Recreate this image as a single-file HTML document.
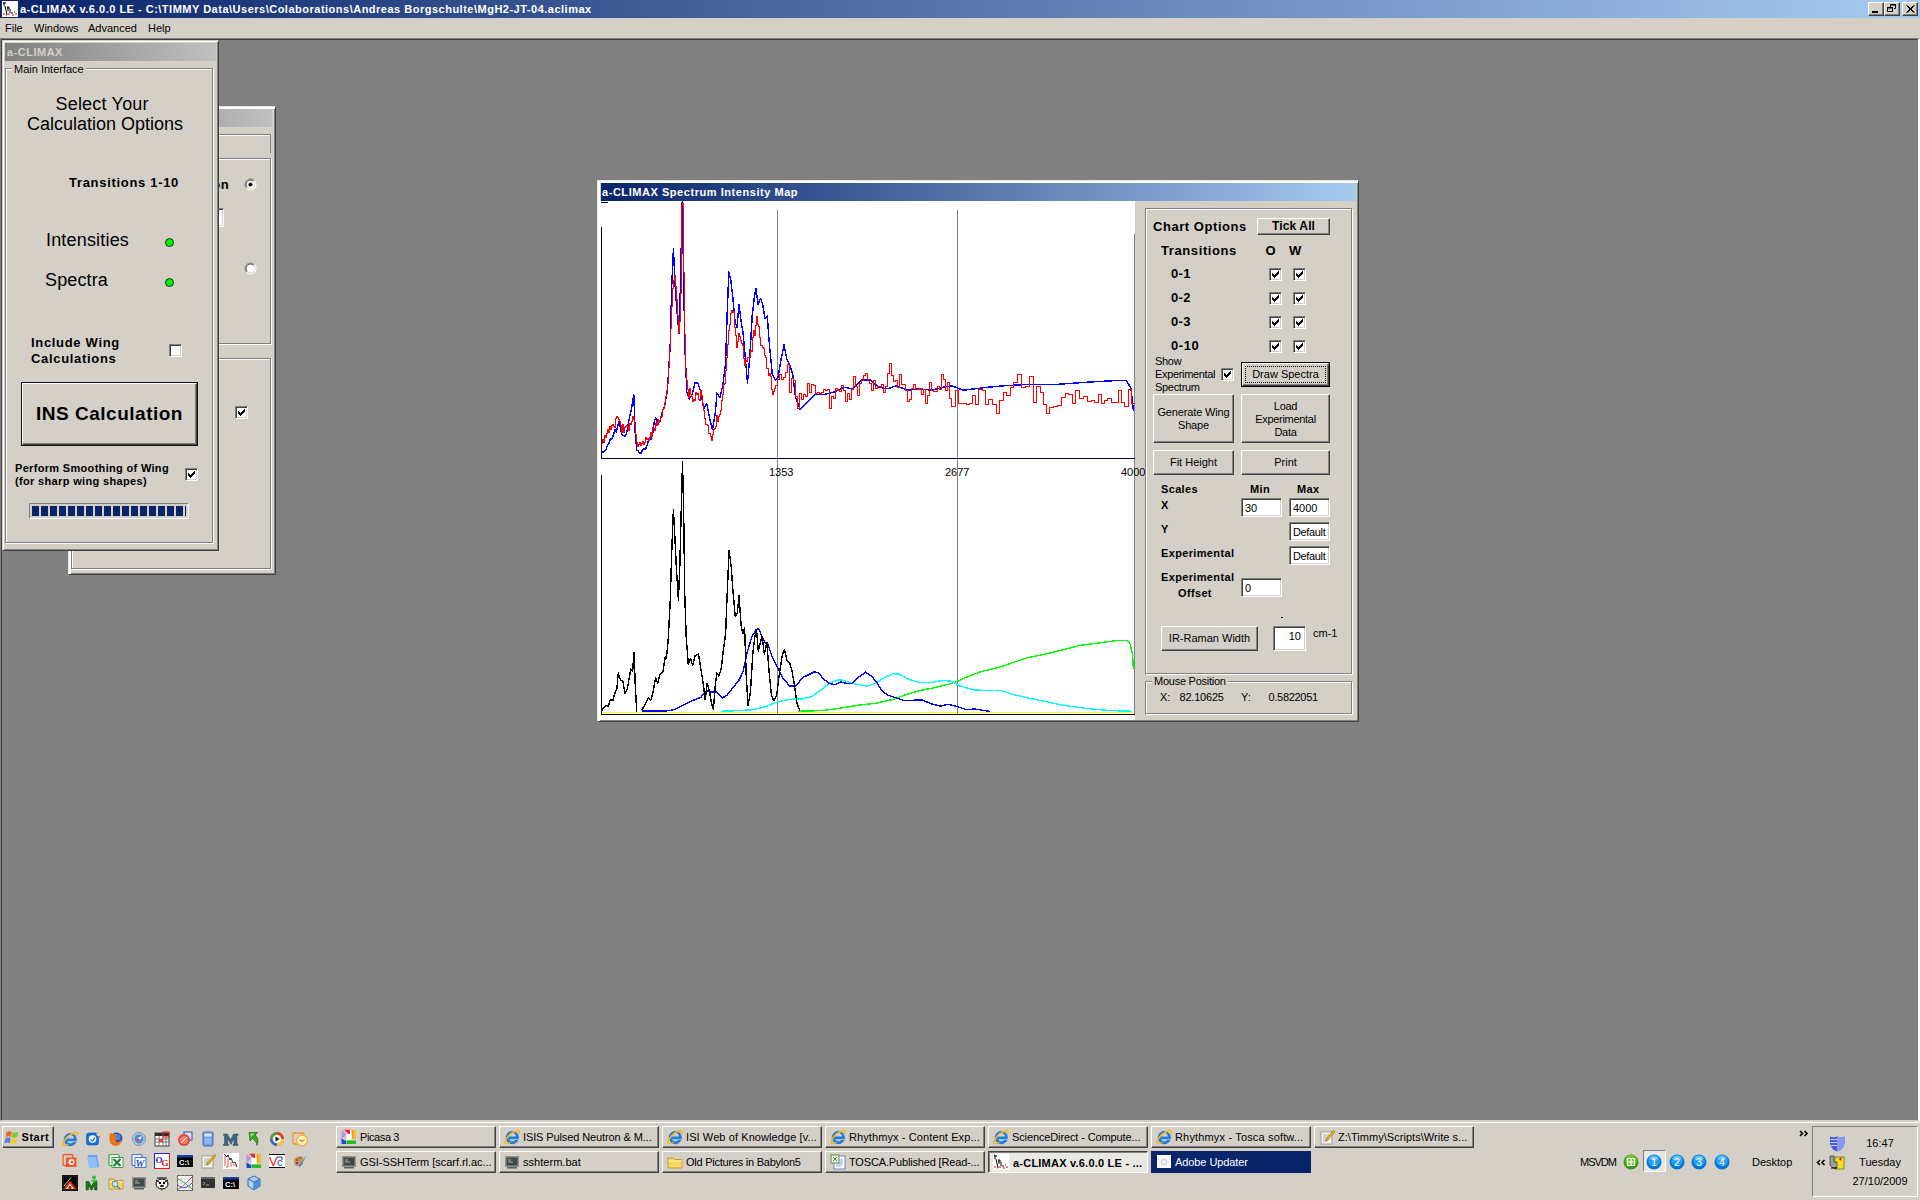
<!DOCTYPE html>
<html><head><meta charset="utf-8"><title>a-CLIMAX</title>
<style>
*{box-sizing:border-box;margin:0;padding:0}
html,body{width:1920px;height:1200px;overflow:hidden}
body{position:relative;background:#808080;font-family:"Liberation Sans",sans-serif;font-size:11px;color:#000;line-height:1}
.a{position:absolute}
.t{position:absolute;white-space:nowrap;line-height:1}
.b{font-weight:bold}
.face{background:#d4d0c8}
/* classic raised window border */
.win{position:absolute;background:#d4d0c8;border:1px solid;border-color:#d4d0c8 #404040 #404040 #d4d0c8;box-shadow:inset 1px 1px 0 #fff,inset -1px -1px 0 #808080}
.btn{position:absolute;background:#d4d0c8;border:1px solid;border-color:#fff #404040 #404040 #fff;box-shadow:inset -1px -1px 0 #808080,inset 1px 1px 0 #d4d0c8;text-align:center;font-size:11px}
.sunk{position:absolute;background:#fff;border:1px solid;border-color:#808080 #fff #fff #808080;box-shadow:inset 1px 1px 0 #404040,inset -1px -1px 0 #d4d0c8}
.grp{position:absolute;border:1px solid #808080;box-shadow:inset 1px 1px 0 #fff,1px 1px 0 #fff}
.etch{position:absolute;border:1px solid #808080;box-shadow:inset 1px 1px 0 #fff,1px 1px 0 #fff}
.cb{position:absolute;width:13px;height:13px;background:#fff;border:1px solid;border-color:#808080 #fff #fff #808080;box-shadow:inset 1px 1px 0 #404040,inset -1px -1px 0 #d4d0c8}
.cb.on:after{content:"";position:absolute;left:2px;top:2px;width:7px;height:7px;background:
 linear-gradient(#000,#000) 0px 2px/1px 3px no-repeat,
 linear-gradient(#000,#000) 1px 3px/1px 3px no-repeat,
 linear-gradient(#000,#000) 2px 4px/1px 3px no-repeat,
 linear-gradient(#000,#000) 3px 3px/1px 3px no-repeat,
 linear-gradient(#000,#000) 4px 2px/1px 3px no-repeat,
 linear-gradient(#000,#000) 5px 1px/1px 3px no-repeat,
 linear-gradient(#000,#000) 6px 0px/1px 3px no-repeat}
.tb{position:absolute;height:22px;width:160px;background:#d4d0c8;border:1px solid;border-color:#fff #404040 #404040 #fff;box-shadow:inset -1px -1px 0 #808080;font-size:11px}
.tb span{position:absolute;left:23px;top:5px;white-space:nowrap;letter-spacing:-.25px}
.tb i{position:absolute;left:4px;top:2px;width:16px;height:16px}
</style></head><body>

<!-- ===== main title bar ===== -->
<div class="a" style="left:0;top:0;width:1920px;height:18px;background:linear-gradient(90deg,#0a246a,#a6caf0)"></div>
<svg class="a" style="left:2px;top:1px" width="16" height="16" viewBox="0 0 16 16"><rect width="16" height="16" fill="#fff"/><path d="M2 1v4M1 2h3M3 5l2 9M5 7h3M6 5v5M8 8v4M9 12h2" stroke="#000" fill="none"/><path d="M1 13h2M4 14h1M6 13h2M10 14h2M13 13h2M12 11h1" stroke="#e00000"/></svg>
<div class="t b" style="left:20px;top:4px;color:#fff;font-size:11px;letter-spacing:.5px">a-CLIMAX v.6.0.0 LE - C:\TIMMY Data\Users\Colaborations\Andreas Borgschulte\MgH2-JT-04.aclimax</div>
<!-- caption buttons -->
<div class="btn" style="left:1868px;top:2px;width:16px;height:14px"><div class="a" style="left:3px;top:8px;width:6px;height:2px;background:#000"></div></div>
<div class="btn" style="left:1884px;top:2px;width:16px;height:14px"><svg class="a" style="left:2px;top:1px" width="10" height="10"><path d="M3.5 3V.5h5v4H7M.5 3.5h5v4h-5zM3 1h6M0 4h6" stroke="#000" fill="none"/></svg></div>
<div class="btn" style="left:1902px;top:2px;width:16px;height:14px"><svg class="a" style="left:3px;top:2px" width="9" height="8"><path d="M0.5 0.5l7 7M1.5 0.5l7 7M7.5 0.5l-7 7M8.5 0.5l-7 7" stroke="#000" stroke-width="1"/></svg></div>

<!-- ===== menu bar ===== -->
<div class="a face" style="left:0;top:18px;width:1920px;height:20px"></div>
<div class="t" style="left:5px;top:23px">File</div>
<div class="t" style="left:34px;top:23px">Windows</div>
<div class="t" style="left:88px;top:23px">Advanced</div>
<div class="t" style="left:148px;top:23px">Help</div>

<!-- ===== MDI client ===== -->
<div class="a" style="left:0;top:38px;width:1920px;height:1083px;background:#808080;border-style:solid;border-width:1px 2px 1px 1px;border-color:#808080 #fff #d4d0c8 #808080;box-shadow:inset 1px 1px 0 #404040"></div>
<!-- ===== back child window ===== -->
<div class="win" style="left:68px;top:106px;width:208px;height:469px;border-color:#e8e6e0 #404040 #404040 #e8e6e0;box-shadow:inset 2px 2px 0 #fff,inset -1px -1px 0 #808080"></div>
<div class="a" style="left:72px;top:109px;width:200px;height:18px;background:linear-gradient(90deg,#808080,#c0c0c0)"></div>
<div class="grp" style="left:71px;top:134px;width:200px;height:19px;border-bottom:none;box-shadow:inset 1px 1px 0 #fff"></div>
<div class="grp" style="left:71px;top:158px;width:200px;height:186px"></div>
<div class="grp" style="left:71px;top:358px;width:200px;height:211px"></div>
<div class="t b" style="left:150px;width:79.5px;text-align:right;top:178px;font-size:13px;letter-spacing:.7px">ion</div>
<div class="sunk" style="left:200px;top:208px;width:24px;height:19px"></div>
<svg class="a" style="left:243.5px;top:177.5px" width="14" height="14"><circle cx="6.5" cy="6.5" r="5.5" fill="#fff"/><path d="M2.6 10.4A5.5 5.5 0 0 1 10.4 2.6" stroke="#808080" fill="none"/><path d="M3.3 9.7A4.5 4.5 0 0 1 9.7 3.3" stroke="#404040" fill="none"/><path d="M10.4 2.6A5.5 5.5 0 0 1 2.6 10.4" stroke="#fff" fill="none"/><path d="M9.7 3.3A4.5 4.5 0 0 1 3.3 9.7" stroke="#d4d0c8" fill="none"/><circle cx="6.5" cy="6.5" r="2" fill="#000"/></svg>
<svg class="a" style="left:243.5px;top:261.5px" width="14" height="14"><circle cx="6.5" cy="6.5" r="5.5" fill="#fff"/><path d="M2.6 10.4A5.5 5.5 0 0 1 10.4 2.6" stroke="#808080" fill="none"/><path d="M3.3 9.7A4.5 4.5 0 0 1 9.7 3.3" stroke="#404040" fill="none"/><path d="M10.4 2.6A5.5 5.5 0 0 1 2.6 10.4" stroke="#fff" fill="none"/><path d="M9.7 3.3A4.5 4.5 0 0 1 3.3 9.7" stroke="#d4d0c8" fill="none"/></svg>
<div class="cb on" style="left:235px;top:406px"></div>

<!-- ===== a-CLIMAX main interface window ===== -->
<div class="win" style="left:2px;top:40px;width:217px;height:511px"></div>
<div class="a" style="left:5px;top:43px;width:211px;height:18px;background:linear-gradient(90deg,#808080,#c0c0c0)"></div>
<div class="t b" style="left:7px;top:47px;color:#d4d0c8;font-size:11px;letter-spacing:.5px">a-CLIMAX</div>
<div class="grp" style="left:5px;top:68px;width:208px;height:475px"></div>
<div class="t face" style="left:12px;top:64px;padding:0 2px;font-size:11px">Main Interface</div>
<div class="t" style="left:55.5px;top:95px;font-size:18px;letter-spacing:.2px">Select Your</div>
<div class="t" style="left:27px;top:115px;font-size:18px">Calculation Options</div>
<div class="t b" style="left:69px;top:176px;font-size:13px;letter-spacing:.69px">Transitions 1-10</div>
<div class="t" style="left:46px;top:231px;font-size:18px;letter-spacing:.18px">Intensities</div>
<div class="a" style="left:165px;top:238px;width:9px;height:9px;border-radius:50%;background:#00f000;border:1px solid #103810"></div>
<div class="t" style="left:45px;top:271px;font-size:18px;letter-spacing:.14px">Spectra</div>
<div class="a" style="left:165px;top:278px;width:9px;height:9px;border-radius:50%;background:#00f000;border:1px solid #103810"></div>
<div class="t b" style="left:31px;top:336px;font-size:13px;letter-spacing:.68px">Include Wing</div>
<div class="t b" style="left:31px;top:352px;font-size:13px;letter-spacing:.68px">Calculations</div>
<div class="cb" style="left:169px;top:344px"></div>
<div class="btn" style="left:22px;top:383px;width:175px;height:62px;box-shadow:inset -1px -1px 0 #808080,0 0 0 1px #101010"></div>
<div class="t b" style="left:21px;width:177px;top:404px;font-size:19px;letter-spacing:.51px;text-align:center">INS Calculation</div>
<div class="t b" style="left:15px;top:463px;letter-spacing:.32px">Perform Smoothing of Wing</div>
<div class="t b" style="left:15px;top:476px;letter-spacing:.34px">(for sharp wing shapes)</div>
<div class="cb on" style="left:185px;top:468px"></div>
<div class="sunk face" style="left:29px;top:503px;width:160px;height:16px;background:#d4d0c8 repeating-linear-gradient(90deg,#0a246a 0,#0a246a 7px,#d4d0c8 7px,#d4d0c8 9px) 2px 0/156px 100% no-repeat;box-shadow:none;border-color:#808080 #fff #fff #808080;background-clip:content-box;padding:2px"></div>

<!-- ===== Spectrum Intensity Map window ===== -->
<div class="win" style="left:597px;top:180px;width:762px;height:542px;border-color:#e8e6e0 #404040 #404040 #e8e6e0;box-shadow:inset 2px 2px 0 #fff,inset -1px -1px 0 #808080"></div>
<div class="a" style="left:601px;top:183px;width:755px;height:18px;background:linear-gradient(90deg,#0a246a,#a6caf0)"></div>
<div class="t b" style="left:602px;top:187px;color:#fff;letter-spacing:.55px">a-CLIMAX Spectrum Intensity Map</div>
<!-- chart -->
<div class="a" style="left:598px;top:201px;width:537px;height:519px;background:#fff;overflow:hidden">
<svg width="534" height="519" viewBox="0 0 534 519" style="position:absolute;left:3px;top:0" shape-rendering="crispEdges">
 <path d="M0 511.5h533" stroke="#ffff00"/>
 <path d="M0 1.5h7" stroke="#000"/>
 <path d="M0.5 26v232" stroke="#000"/>
 <path d="M533.5 33v481" stroke="#808080"/>
 <path d="M176.5 9v504M356.5 9v504" stroke="#808080"/>
 <path d="M0 257.5h534" stroke="#000040"/>
 <path d="M0.5 274v240" stroke="#000"/>
 <path d="M0 513.5h534" stroke="#000"/>
</svg>
<svg width="534" height="519" viewBox="0 0 534 519" style="position:absolute;left:3px;top:0" fill="none" stroke-width="1.42" stroke-linejoin="round" shape-rendering="crispEdges">
 <path d="M0.7,251.9 L2.1,250.9 L3.6,250.4 L5.0,248.3 L6.5,244.6 L8.0,242.0 L9.4,237.8 L10.9,237.9 L12.3,234.4 L13.8,228.6 L15.2,231.2 L16.7,225.7 L18.2,219.8 L20.5,233.0 L22.5,234.4 L24.0,235.4 L25.5,233.0 L26.9,225.0 L28.4,216.9 L30.4,208.2 L32.8,193.6 L34.2,231.5 L35.7,249.0 L37.1,249.9 L38.6,251.9 L40.0,252.1 L41.5,249.0 L43.0,247.5 L44.4,248.5 L45.9,244.7 L47.3,240.2 L48.8,238.4 L50.2,237.9 L51.7,233.0 L53.2,221.0 L54.6,216.9 L56.1,221.4 L57.5,222.8 L59.0,220.3 L60.5,214.8 L61.9,208.2 L63.4,206.1 L64.8,197.7 L66.3,190.7 L69.2,144.0 L70.7,85.7 L72.4,47.8 L74.2,85.7 L75.9,109.0 L78.0,132.3 L79.4,85.7 L81.2,1.1 L82.3,56.5 L83.8,144.0 L85.8,190.7 L88.2,198.0 L91.1,193.6 L94.0,181.9 L96.9,181.9 L99.8,190.7 L102.8,208.2 L105.7,202.3 L108.6,216.9 L111.5,228.6 L114.4,211.1 L115.9,192.1 L118.8,196.5 L121.7,184.8 L124.6,161.5 L126.1,114.8 L127.8,71.1 L129.9,79.8 L131.9,97.3 L134.0,120.7 L136.0,126.5 L138.0,103.2 L140.1,120.7 L142.1,132.3 L144.2,155.7 L146.5,181.9 L148.8,155.7 L151.2,114.8 L153.2,97.3 L155.0,87.1 L157.0,103.2 L159.6,97.3 L161.7,103.2 L164.0,117.8 L166.3,114.8 L168.4,144.0 L171.3,173.2 L174.2,179.0 L177.1,176.1 L180.0,158.6 L183.0,144.0 L185.9,158.6 L188.8,164.4 L191.7,173.2 L194.6,196.5 L199.0,208.2 L204.8,202.3 L213.6,193.6 L222.3,193.6 L234.0,190.7 L242.8,186.3 L251.5,187.8 L260.2,179.0 L269.0,179.0 L277.8,186.3 L286.5,187.8 L295.2,184.8 L306.9,189.2 L318.6,187.8 L330.2,189.2 L341.9,186.3 L350.7,184.8 L362.3,189.2 L374.0,187.8 L385.7,186.3 L403.2,184.8 L426.5,183.4 L455.7,183.4 L484.8,181.3 L514.0,179.6 L525.7,179.6 L530.0,187.8 L532.4,209.6" stroke="#0000ff"/>
 <path d="M0.5,242.5 L1.5,242.5 L1.5,238.5 L2.5,238.5 L2.5,241.5 L3.5,241.5 L3.5,234.5 L4.5,234.5 L4.5,236.5 L5.5,236.5 L5.5,232.5 L6.5,232.5 L6.5,228.5 L7.5,228.5 L7.5,231.5 L8.5,231.5 L8.5,225.5 L9.5,225.5 L9.5,228.5 L10.5,228.5 L10.5,224.5 L11.5,224.5 L11.5,223.5 L12.5,223.5 L12.5,225.5 L13.5,225.5 L13.5,226.5 L14.5,226.5 L14.5,217.5 L15.5,217.5 L15.5,215.5 L16.5,215.5 L16.5,216.5 L17.5,216.5 L17.5,218.5 L18.5,218.5 L18.5,220.5 L19.5,220.5 L19.5,224.5 L20.5,224.5 L20.5,231.5 L21.5,231.5 L21.5,223.5 L22.5,223.5 L22.5,231.5 L23.5,231.5 L23.5,226.5 L24.5,226.5 L24.5,225.5 L25.5,225.5 L25.5,224.5 L26.5,224.5 L26.5,225.5 L27.5,225.5 L27.5,229.5 L28.5,229.5 L28.5,222.5 L29.5,222.5 L29.5,223.5 L30.5,223.5 L30.5,220.5 L31.5,220.5 L31.5,215.5 L32.5,215.5 L32.5,218.5 L33.5,218.5 L33.5,223.5 L34.5,223.5 L34.5,233.5 L35.5,233.5 L35.5,241.5 L36.5,241.5 L36.5,245.5 L37.5,245.5 L37.5,243.5 L38.5,243.5 L38.5,241.5 L39.5,241.5 L39.5,244.5 L40.5,244.5 L40.5,242.5 L41.5,242.5 L41.5,240.5 L42.5,240.5 L42.5,243.5 L43.5,243.5 L43.5,241.5 L44.5,241.5 L44.5,236.5 L45.5,236.5 L45.5,238.5 L46.5,238.5 L46.5,237.5 L47.5,237.5 L47.5,239.5 L48.5,239.5 L48.5,236.5 L49.5,236.5 L49.5,231.5 L50.5,231.5 L50.5,235.5 L51.5,235.5 L51.5,226.5 L52.5,226.5 L52.5,227.5 L53.5,227.5 L53.5,229.5 L54.5,229.5 L54.5,222.5 L55.5,222.5 L55.5,224.5 L56.5,224.5 L56.5,218.5 L57.5,218.5 L57.5,221.5 L58.5,221.5 L58.5,219.5 L59.5,219.5 L59.5,215.5 L60.5,215.5 L60.5,215.5 L61.5,215.5 L61.5,208.5 L62.5,208.5 L62.5,207.5 L63.5,207.5 L63.5,201.5 L64.5,201.5 L64.5,195.5 L65.5,195.5 L65.5,189.5 L66.5,189.5 L66.5,182.5 L67.5,182.5 L67.5,165.5 L68.5,165.5 L68.5,145.5 L69.5,145.5 L69.5,127.5 L70.5,127.5 L70.5,105.5 L71.5,105.5 L71.5,87.5 L72.5,87.5 L72.5,79.5 L73.5,79.5 L73.5,74.5 L74.5,74.5 L74.5,85.5 L75.5,85.5 L75.5,98.5 L76.5,98.5 L76.5,114.5 L77.5,114.5 L77.5,131.5 L78.5,131.5 L78.5,120.5 L79.5,120.5 L79.5,92.5 L80.5,92.5 L80.5,4.5 L81.5,4.5 L81.5,2.5 L82.5,2.5 L82.5,71.5 L83.5,71.5 L83.5,133.5 L84.5,133.5 L84.5,170.5 L85.5,170.5 L85.5,179.5 L86.5,179.5 L86.5,188.5 L87.5,188.5 L87.5,196.5 L88.5,196.5 L88.5,187.5 L89.5,187.5 L89.5,193.5 L90.5,193.5 L90.5,195.5 L91.5,195.5 L91.5,200.5 L92.5,200.5 L92.5,198.5 L93.5,198.5 L93.5,199.5 L94.5,199.5 L94.5,191.5 L95.5,191.5 L95.5,193.5 L96.5,193.5 L96.5,192.5 L97.5,192.5 L97.5,198.5 L98.5,198.5 L98.5,199.5 L99.5,199.5 L99.5,189.5 L100.5,189.5 L100.5,194.5 L101.5,194.5 L101.5,202.5 L102.5,202.5 L102.5,209.5 L103.5,209.5 L103.5,217.5 L104.5,217.5 L104.5,223.5 L105.5,223.5 L105.5,223.5 L106.5,223.5 L106.5,224.5 L107.5,224.5 L107.5,232.5 L108.5,232.5 L108.5,232.5 L109.5,232.5 L109.5,235.5 L110.5,235.5 L110.5,239.5 L111.5,239.5 L111.5,233.5 L112.5,233.5 L112.5,228.5 L113.5,228.5 L113.5,227.5 L114.5,227.5 L114.5,225.5 L115.5,225.5 L115.5,214.5 L116.5,214.5 L116.5,220.5 L117.5,220.5 L117.5,215.5 L118.5,215.5 L118.5,213.5 L119.5,213.5 L119.5,209.5 L120.5,209.5 L120.5,199.5 L121.5,199.5 L121.5,193.5 L122.5,193.5 L122.5,183.5 L123.5,183.5 L123.5,182.5 L124.5,182.5 L124.5,169.5 L125.5,169.5 L125.5,156.5 L126.5,156.5 L126.5,143.5 L127.5,143.5 L127.5,129.5 L128.5,129.5 L128.5,123.5 L129.5,123.5 L129.5,112.5 L130.5,112.5 L130.5,109.5 L131.5,109.5 L131.5,111.5 L132.5,111.5 L132.5,110.5 L133.5,110.5 L133.5,126.5 L134.5,126.5 L134.5,134.5 L135.5,134.5 L135.5,146.5 L136.5,146.5 L136.5,140.5 L137.5,140.5 L137.5,132.5 L138.5,132.5 L138.5,135.5 L139.5,135.5 L139.5,139.5 L140.5,139.5 L140.5,142.5 L141.5,142.5 L141.5,144.5 L142.5,144.5 L142.5,157.5 L143.5,157.5 L143.5,164.5 L144.5,164.5 L144.5,159.5 L145.5,159.5 L145.5,160.5 L146.5,160.5 L146.5,156.5 L147.5,156.5 L147.5,156.5 L148.5,156.5 L148.5,156.5 L149.5,156.5 L149.5,149.5 L150.5,149.5 L150.5,150.5 L151.5,150.5 L151.5,136.5 L152.5,136.5 L152.5,129.5 L153.5,129.5 L153.5,134.5 L154.5,134.5 L154.5,124.5 L155.5,124.5 L155.5,115.5 L156.5,115.5 L156.5,123.5 L157.5,123.5 L157.5,125.5 L158.5,125.5 L158.5,136.5 L159.5,136.5 L159.5,144.5 L160.5,144.5 L160.5,144.5 L161.5,144.5 L161.5,146.5 L162.5,146.5 L162.5,147.5 L163.5,147.5 L163.5,154.5 L164.5,154.5 L164.5,156.5 L165.5,156.5 L165.5,167.5 L166.5,167.5 L166.5,167.5 L167.5,167.5 L167.5,174.5 L168.5,174.5 L168.5,172.5 L169.5,172.5 L169.5,175.5 L170.5,175.5 L170.5,188.5 L171.5,188.5 L171.5,193.5 L172.5,193.5 L172.5,190.5 L173.5,190.5 L173.5,187.5 L174.5,187.5 L174.5,184.5 L176.5,184.5 L176.5,178.5 L178.5,178.5 L178.5,173.5 L180.5,173.5 L180.5,178.5 L182.5,178.5 L182.5,176.5 L184.5,176.5 L184.5,171.5 L186.5,171.5 L186.5,163.5 L188.5,163.5 L188.5,191.5 L190.5,191.5 L190.5,177.5 L192.5,177.5 L192.5,179.5 L194.5,179.5 L194.5,195.5 L196.5,195.5 L196.5,207.5 L198.5,207.5 L198.5,192.5 L200.5,192.5 L200.5,198.5 L202.5,198.5 L202.5,193.5 L204.5,193.5 L204.5,195.5 L206.5,195.5 L206.5,182.5 L208.5,182.5 L208.5,191.5 L210.5,191.5 L210.5,183.5 L212.5,183.5 L212.5,184.5 L214.5,184.5 L214.5,192.5 L216.5,192.5 L216.5,191.5 L218.5,191.5 L218.5,192.5 L220.5,192.5 L220.5,191.5 L222.5,191.5 L222.5,188.5 L224.5,188.5 L224.5,189.5 L226.5,189.5 L226.5,188.5 L228.5,188.5 L228.5,207.5 L230.5,207.5 L230.5,195.5 L232.5,195.5 L232.5,197.5 L234.5,197.5 L234.5,187.5 L236.5,187.5 L236.5,189.5 L238.5,189.5 L238.5,190.5 L240.5,190.5 L240.5,184.5 L242.5,184.5 L242.5,189.5 L244.5,189.5 L244.5,200.5 L246.5,200.5 L246.5,192.5 L248.5,192.5 L248.5,198.5 L250.5,198.5 L250.5,188.5 L252.5,188.5 L252.5,175.5 L254.5,175.5 L254.5,185.5 L256.5,185.5 L256.5,194.5 L258.5,194.5 L258.5,182.5 L260.5,182.5 L260.5,179.5 L262.5,179.5 L262.5,174.5 L264.5,174.5 L264.5,172.5 L266.5,172.5 L266.5,178.5 L268.5,178.5 L268.5,182.5 L270.5,182.5 L270.5,189.5 L272.5,189.5 L272.5,179.5 L274.5,179.5 L274.5,187.5 L276.5,187.5 L276.5,185.5 L278.5,185.5 L278.5,185.5 L280.5,185.5 L280.5,183.5 L282.5,183.5 L282.5,191.5 L284.5,191.5 L284.5,185.5 L286.5,185.5 L286.5,172.5 L288.5,172.5 L288.5,162.5 L290.5,162.5 L290.5,174.5 L292.5,174.5 L292.5,180.5 L294.5,180.5 L294.5,179.5 L296.5,179.5 L296.5,186.5 L298.5,186.5 L298.5,173.5 L300.5,173.5 L300.5,183.5 L302.5,183.5 L302.5,183.5 L304.5,183.5 L304.5,189.5 L306.5,189.5 L306.5,200.5 L308.5,200.5 L308.5,198.5 L310.5,198.5 L310.5,187.5 L312.5,187.5 L312.5,183.5 L314.5,183.5 L314.5,187.5 L316.5,187.5 L316.5,188.5 L318.5,188.5 L318.5,187.5 L320.5,187.5 L320.5,193.5 L322.5,193.5 L322.5,188.5 L324.5,188.5 L324.5,202.5 L326.5,202.5 L326.5,194.5 L328.5,194.5 L328.5,181.5 L330.5,181.5 L330.5,189.5 L332.5,189.5 L332.5,190.5 L334.5,190.5 L334.5,190.5 L336.5,190.5 L336.5,185.5 L338.5,185.5 L338.5,188.5 L340.5,188.5 L340.5,173.5 L342.5,173.5 L342.5,178.5 L344.5,178.5 L344.5,189.5 L346.5,189.5 L346.5,181.5 L348.5,181.5 L348.5,197.5 L350.5,197.5 L350.5,205.5 L354.5,205.5 L354.5,189.5 L357.5,189.5 L357.5,202.5 L361.5,202.5 L361.5,202.5 L365.5,202.5 L365.5,203.5 L368.5,203.5 L368.5,202.5 L371.5,202.5 L371.5,194.5 L374.5,194.5 L374.5,203.5 L377.5,203.5 L377.5,188.5 L381.5,188.5 L381.5,189.5 L384.5,189.5 L384.5,203.5 L387.5,203.5 L387.5,198.5 L391.5,198.5 L391.5,203.5 L395.5,203.5 L395.5,212.5 L398.5,212.5 L398.5,199.5 L402.5,199.5 L402.5,191.5 L405.5,191.5 L405.5,194.5 L409.5,194.5 L409.5,186.5 L412.5,186.5 L412.5,181.5 L416.5,181.5 L416.5,173.5 L420.5,173.5 L420.5,186.5 L424.5,186.5 L424.5,185.5 L428.5,185.5 L428.5,175.5 L432.5,175.5 L432.5,201.5 L435.5,201.5 L435.5,185.5 L439.5,185.5 L439.5,191.5 L442.5,191.5 L442.5,203.5 L445.5,203.5 L445.5,212.5 L448.5,212.5 L448.5,206.5 L452.5,206.5 L452.5,205.5 L456.5,205.5 L456.5,204.5 L460.5,204.5 L460.5,196.5 L464.5,196.5 L464.5,192.5 L467.5,192.5 L467.5,193.5 L471.5,193.5 L471.5,202.5 L474.5,202.5 L474.5,189.5 L478.5,189.5 L478.5,197.5 L482.5,197.5 L482.5,195.5 L486.5,195.5 L486.5,200.5 L490.5,200.5 L490.5,199.5 L493.5,199.5 L493.5,201.5 L497.5,201.5 L497.5,193.5 L500.5,193.5 L500.5,202.5 L503.5,202.5 L503.5,199.5 L506.5,199.5 L506.5,197.5 L510.5,197.5 L510.5,201.5 L513.5,201.5 L513.5,201.5 L517.5,201.5 L517.5,189.5 L520.5,189.5 L520.5,201.5 L523.5,201.5 L523.5,205.5 L527.5,205.5 L527.5,188.5 L530.5,188.5 L530.5,202.5 L533.5,202.5" stroke="#ff0000" stroke-width="1"/>
 <path d="M197.5,510.3 L222.3,509.5 L239.8,507.1 L257.3,504.2 L274.8,502.2 L292.3,498.4 L304.0,494.0 L318.6,489.6 L333.2,486.7 L347.8,483.2 L356.5,480.3 L368.2,475.0 L379.8,470.7 L391.5,467.8 L403.2,464.8 L414.8,460.5 L426.5,456.7 L444.0,453.2 L461.5,448.8 L479.0,444.4 L496.5,442.1 L514.0,439.8 L525.7,439.5 L529.2,443.0 L531.5,453.2 L532.4,467.8" stroke="#00ff00"/>
 <path d="M120.2,510.3 L140.7,509.5 L152.3,508.6 L164.0,505.7 L175.7,501.3 L187.3,498.4 L201.9,497.8 L210.7,495.5 L219.4,489.6 L228.2,482.3 L236.9,478.8 L242.8,479.4 L251.5,482.3 L266.1,485.2 L274.8,482.3 L283.6,476.5 L292.3,472.7 L298.2,473.0 L306.9,478.0 L318.6,481.5 L330.2,481.5 L341.9,479.4 L350.7,480.3 L359.4,485.2 L374.0,489.0 L388.6,489.6 L400.2,489.6 L411.9,493.4 L426.5,496.9 L444.0,500.4 L461.5,504.2 L484.8,507.4 L508.2,509.5 L531.5,510.3" stroke="#00ffff"/>
 <path d="M40.6,510.0 L64.8,510.0 L73.6,508.6 L82.3,504.2 L91.1,499.8 L99.8,496.3 L105.7,489.6 L110.0,491.1 L115.9,491.1 L121.7,496.9 L126.1,494.0 L131.9,486.7 L137.8,479.4 L142.1,470.7 L146.5,450.2 L150.9,435.7 L155.2,428.4 L157.6,427.5 L161.1,435.7 L164.0,441.5 L166.9,443.0 L171.3,456.1 L175.7,464.8 L181.5,476.5 L188.8,485.2 L194.6,485.2 L201.9,476.5 L207.8,473.6 L213.6,470.7 L218.0,472.1 L222.3,478.0 L228.2,482.3 L234.0,483.8 L239.8,480.9 L245.7,482.3 L251.5,482.3 L257.3,476.5 L264.6,471.2 L270.5,475.0 L276.3,482.3 L280.7,489.6 L286.5,494.0 L295.2,496.9 L304.0,499.8 L312.8,499.2 L321.5,499.2 L330.2,502.8 L339.0,505.1 L347.8,503.3 L356.5,505.7 L365.2,508.6 L374.0,508.0 L382.8,509.5 L388.6,510.3" stroke="#0000ff"/>
 <path d="M0.7,509.5 L5.0,504.2 L7.1,505.7 L9.4,498.4 L11.8,499.8 L13.8,492.5 L15.8,488.2 L17.3,472.1 L19.6,479.4 L21.7,479.4 L24.0,492.5 L26.3,488.2 L29.8,467.8 L31.6,470.7 L33.0,451.7 L34.2,482.3 L35.7,510.6 M40.6,509.5 L44.4,502.8 L47.3,496.9 L49.7,499.8 L52.0,491.1 L54.6,476.5 L56.7,482.3 L59.0,473.6 L61.9,470.7 L64.2,456.1 L65.4,457.5 L67.2,438.6 L69.2,400.7 L70.7,351.1 L72.4,308.8 L73.9,336.5 L75.3,365.7 L77.4,399.2 L78.8,365.7 L80.3,307.3 L81.5,261.2 L82.6,307.3 L83.8,394.8 L85.2,435.7 L87.3,463.4 L89.6,457.5 L91.7,464.8 L94.0,454.6 L97.5,453.2 L99.8,467.8 L102.2,482.3 L104.2,498.4 L106.2,482.3 L108.6,491.1 L110.6,502.8 L112.4,508.6 L114.4,482.3 L115.9,472.1 L117.9,475.0 L120.2,467.8 L122.6,447.3 L124.6,432.8 L126.1,394.8 L128.1,349.6 L130.2,365.7 L131.9,389.0 L134.2,415.2 L136.3,412.3 L138.0,394.8 L140.1,424.0 L141.8,432.8 L143.6,426.9 L145.3,476.5 L147.1,504.2 L149.4,491.1 L151.8,453.2 L153.8,435.7 L155.5,428.4 L157.3,450.2 L159.3,441.5 L161.1,435.7 L163.4,453.2 L165.8,441.5 L168.1,470.7 L170.4,494.0 L172.8,499.8 L175.7,494.0 L178.6,470.7 L181.5,453.2 L183.5,448.8 L185.9,459.0 L188.8,461.9 L191.1,470.7 L193.2,482.3 L196.1,502.8 L199.0,509.5" stroke="#000"/>
</svg>
</div>
<div class="t" style="left:769px;top:467px">1353</div>
<div class="t" style="left:945px;top:467px">2677</div>
<div class="t" style="left:1121px;top:467px">4000</div>
<!-- options panel -->
<div class="etch" style="left:1145px;top:208px;width:207px;height:466px"></div>
<div class="t b" style="left:1153px;top:219.5px;font-size:13px;letter-spacing:.55px">Chart Options</div>
<div class="btn b" style="left:1257px;top:218px;width:73px;height:17px;font-size:12px;line-height:14px;letter-spacing:.15px">Tick All</div>
<div class="t b" style="left:1161px;top:243.5px;font-size:13px;letter-spacing:.6px">Transitions</div>
<div class="t b" style="left:1265.5px;top:243.5px;font-size:13px">O</div>
<div class="t b" style="left:1289px;top:243.5px;font-size:13px">W</div>
<div class="t b" style="left:1171px;top:267px;font-size:13px;letter-spacing:.3px">0-1</div>
<div class="t b" style="left:1171px;top:291px;font-size:13px;letter-spacing:.3px">0-2</div>
<div class="t b" style="left:1171px;top:315px;font-size:13px;letter-spacing:.3px">0-3</div>
<div class="t b" style="left:1171px;top:339px;font-size:13px;letter-spacing:.6px">0-10</div>
<div class="cb on" style="left:1269px;top:268px"></div>
<div class="cb on" style="left:1293px;top:268px"></div>
<div class="cb on" style="left:1269px;top:292px"></div>
<div class="cb on" style="left:1293px;top:292px"></div>
<div class="cb on" style="left:1269px;top:316px"></div>
<div class="cb on" style="left:1293px;top:316px"></div>
<div class="cb on" style="left:1269px;top:340px"></div>
<div class="cb on" style="left:1293px;top:340px"></div>
<div class="t" style="left:1155px;top:356px;letter-spacing:-.3px">Show</div>
<div class="t" style="left:1155px;top:369px;letter-spacing:-.33px">Experimental</div>
<div class="t" style="left:1155px;top:382px;letter-spacing:-.3px">Spectrum</div>
<div class="cb on" style="left:1221px;top:368px"></div>
<div class="btn" style="left:1242px;top:363px;width:87px;height:23px;box-shadow:inset -1px -1px 0 #808080,0 0 0 1px #000;line-height:20px">Draw Spectra<div class="a" style="left:2px;top:2px;right:2px;bottom:2px;border:1px dotted #000"></div></div>
<div class="btn" style="left:1153px;top:394px;width:81px;height:49px;line-height:13px;padding-top:11px;letter-spacing:-.15px">Generate Wing<br>Shape</div>
<div class="btn" style="left:1241px;top:394px;width:89px;height:49px;line-height:13px;padding-top:5px;letter-spacing:-.3px">Load<br>Experimental<br>Data</div>
<div class="btn" style="left:1153px;top:450px;width:81px;height:25px;line-height:22px">Fit Height</div>
<div class="btn" style="left:1241px;top:450px;width:89px;height:25px;line-height:22px">Print</div>
<div class="t b" style="left:1161px;top:484px;letter-spacing:.35px">Scales</div>
<div class="t b" style="left:1250px;top:484px;letter-spacing:.35px">Min</div>
<div class="t b" style="left:1297px;top:484px;letter-spacing:.35px">Max</div>
<div class="t b" style="left:1161px;top:500px">X</div>
<div class="sunk" style="left:1241px;top:498px;width:41px;height:19px"><div class="t" style="left:3px;top:4px">30</div></div>
<div class="sunk" style="left:1289px;top:498px;width:41px;height:19px"><div class="t" style="left:3px;top:4px">4000</div></div>
<div class="t b" style="left:1161px;top:524px">Y</div>
<div class="sunk" style="left:1289px;top:522px;width:41px;height:19px"><div class="t" style="left:3px;top:4px;letter-spacing:-.35px">Default</div></div>
<div class="t b" style="left:1161px;top:548px;letter-spacing:.35px">Experimental</div>
<div class="sunk" style="left:1289px;top:546px;width:41px;height:19px"><div class="t" style="left:3px;top:4px;letter-spacing:-.35px">Default</div></div>
<div class="t b" style="left:1161px;top:572px;letter-spacing:.35px">Experimental</div>
<div class="t b" style="left:1178px;top:588px;letter-spacing:.35px">Offset</div>
<div class="sunk" style="left:1241px;top:578px;width:41px;height:19px"><div class="t" style="left:3px;top:4px">0</div></div>
<div class="a" style="left:1281px;top:617px;width:2px;height:1px;background:#202020"></div>
<div class="btn" style="left:1161px;top:626px;width:97px;height:25px;line-height:22px">IR-Raman Width</div>
<div class="sunk" style="left:1273px;top:626px;width:33px;height:25px"><div class="t" style="right:4px;top:4px">10</div></div>
<div class="t" style="left:1313px;top:628px">cm-1</div>
<div class="grp" style="left:1145px;top:681px;width:207px;height:33px"></div>
<div class="t face" style="left:1152px;top:676px;padding:0 2px;letter-spacing:-.25px">Mouse Position</div>
<div class="t" style="left:1160px;top:692px">X:</div>
<div class="t" style="left:1179.5px;top:692px;letter-spacing:-.2px">82.10625</div>
<div class="t" style="left:1241px;top:692px">Y:</div>
<div class="t" style="left:1268.500px;top:692px;letter-spacing:-.3px">0.5822051</div>


<!-- ===== taskbar ===== -->
<div class="a face" style="left:0;top:1121px;width:1920px;height:79px;border-top:1px solid #d4d0c8;box-shadow:inset 0 1px 0 #fff"></div>
<svg width="0" height="0" style="position:absolute"><defs>
<g id="ie"><circle cx="8.300" cy="8.600" r="6.300" fill="#1e7fe0"/><circle cx="8.300" cy="8.600" r="6.300" fill="none" stroke="#1464c0" stroke-width=".5"/><path d="M4.800 7.600a3.500 3.500 0 0 1 7 0z" fill="#d4d0c8"/><path d="M4.800 9.800h9.600v-1.200" stroke="#d4d0c8" stroke-width="0" fill="none"/><path d="M5 10.200a3.500 3 0 0 0 6.200 1.100h3.200l.4-2.100H5z" fill="#d4d0c8" transform="translate(0,-.2)"/><path d="M5 8.400h9.500v1.900H5z" fill="#1e7fe0"/><path d="M11.400 11.200h3a6.300 6.300 0 0 0 .3-1H5" fill="none"/><path d="M1 13.500C1.500 9 7 3 13.500 1.500c2-.3 2.300 1 1.300 3" stroke="#f4b820" stroke-width="1.500" fill="none" stroke-linecap="round"/><path d="M1 13.500c0 1.800 2.500 1.500 5 0" stroke="#f4b820" stroke-width="1.300" fill="none" stroke-linecap="round"/></g>
<g id="pic"><path d="M.5 1v9l5-4.500z" fill="#b494f0"/><path d="M3 .8h6.500v6z" fill="#f02818"/><rect x="11" y="1" width="3.500" height="9" fill="#ff9a10"/><rect x="12.500" y="1" width="2" height="9" fill="#ffc020"/><path d="M.5 9.500V15h4.500V12z" fill="#1848d8"/><rect x="5.500" y="11.500" width="9.500" height="3.500" fill="#20c020"/><rect x="5.500" y="5.500" width="5" height="5.500" fill="#fff"/><path d="M9.500 1v4.500H5.500" fill="none" stroke="#fff" stroke-width="1"/></g>
<g id="term"><rect x="1" y="2" width="14" height="11" fill="#909090"/><rect x="2.5" y="3.5" width="11" height="8" fill="#404848"/><rect x="3" y="13" width="10" height="1.5" fill="#606060"/><path d="M4 6h3M4 8h5" stroke="#a0b0a0"/></g>
<g id="fold"><path d="M1 4h5l1.5 1.5H15V14H1z" fill="#f5d860" stroke="#b89020" stroke-width=".8"/><path d="M1 7h14" stroke="#fff0a0"/></g>
<g id="doc"><rect x="4" y="2" width="11" height="13" fill="#fff" stroke="#5070b0" stroke-width=".8"/><path d="M6 6h7M6 8h7M6 10h7M6 12h5" stroke="#7090d0" stroke-width=".8"/><rect x="1" y="1" width="8" height="8" fill="#e8f0e0" stroke="#408040" stroke-width=".8"/><path d="M3 3l4 4M7 3l-4 4" stroke="#408040"/></g>
<g id="acl"><rect width="16" height="16" fill="#fff"/><path d="M2 1v4M1 2h3M3 5l2 9M5 7h3M6 5v5M8 8v4M9 12h2" stroke="#000" fill="none"/><path d="M1 13h2M4 14h1M6 13h2M10 14h2M13 13h2M12 11h1M1 1h1" stroke="#e00000"/></g>
<g id="npp"><rect x="2" y="3" width="11" height="12" fill="#f4f4e8" stroke="#909090" stroke-width=".8"/><path d="M4 6h7M4 8h7M4 10h7M4 12h5" stroke="#a0a0a0" stroke-width=".8"/><path d="M14.5 1.5l-7 8-1 2.5 2.4-1.2 7-8z" fill="#f0c020" stroke="#806000" stroke-width=".6"/></g>
<g id="cmd"><rect x="0" y="2" width="16" height="12" fill="#000"/><rect x="0" y="2" width="16" height="2.5" fill="#1040a0"/><text x="2" y="12" font-family="Liberation Sans" font-size="7.5" font-weight="bold" fill="#fff">C:\</text></g>
<g id="ball"><circle cx="8" cy="8" r="7.5" fill="#0878d8"/><circle cx="8" cy="6.5" r="5.8" fill="#28a0f0"/><ellipse cx="8" cy="4.2" rx="4" ry="2.2" fill="#90d0ff" opacity=".7"/></g>
</defs></svg>

<div class="btn" style="left:2px;top:1126px;width:52px;height:22px"><svg class="a" style="left:1px;top:2px" width="17" height="16" viewBox="0 0 17 16"><g transform="skewY(-6) translate(0,2)"><path d="M2.500 1.500q2.800-1.600 5.200.2l-.9 5q-2.400-1.700-5.200-.1z" fill="#f0642a"/><path d="M8.600 2q2.600 1.600 5.600 0l-.9 5q-3 1.600-5.600 0z" fill="#7ec832"/><path d="M1.400 7.600q2.800-1.600 5.200.2l-.9 5q-2.400-1.700-5.200-.1z" fill="#4a86e0"/><path d="M7.500 8.100q2.600 1.600 5.600 0l-.9 5q-3 1.600-5.600 0z" fill="#f8cc20"/></g></svg><div class="t b" style="left:18.500px;top:5px;font-size:11px;letter-spacing:.55px">Start</div></div>
<div class="tb" style="left:336px;top:1126px;"><svg class="a" style="left:4px;top:2px" width="16" height="16"><use href="#pic"/></svg><span style="letter-spacing:-0.40px">Picasa 3</span></div>
<div class="tb" style="left:499px;top:1126px;"><svg class="a" style="left:4px;top:2px" width="16" height="16"><use href="#ie"/></svg><span style="letter-spacing:-0.11px">ISIS Pulsed Neutron &amp; M...</span></div>
<div class="tb" style="left:662px;top:1126px;"><svg class="a" style="left:4px;top:2px" width="16" height="16"><use href="#ie"/></svg><span style="letter-spacing:0.09px">ISI Web of Knowledge [v...</span></div>
<div class="tb" style="left:825px;top:1126px;"><svg class="a" style="left:4px;top:2px" width="16" height="16"><use href="#ie"/></svg><span style="letter-spacing:0.10px">Rhythmyx - Content Exp...</span></div>
<div class="tb" style="left:988px;top:1126px;"><svg class="a" style="left:4px;top:2px" width="16" height="16"><use href="#ie"/></svg><span style="letter-spacing:-0.12px">ScienceDirect - Compute...</span></div>
<div class="tb" style="left:1151px;top:1126px;"><svg class="a" style="left:4px;top:2px" width="16" height="16"><use href="#ie"/></svg><span style="letter-spacing:0.16px">Rhythmyx - Tosca softw...</span></div>
<div class="tb" style="left:1314px;top:1126px;"><svg class="a" style="left:4px;top:2px" width="16" height="16"><use href="#npp"/></svg><span style="letter-spacing:0.04px">Z:\Timmy\Scripts\Write s...</span></div>
<div class="tb" style="left:336px;top:1151px;"><svg class="a" style="left:4px;top:2px" width="16" height="16"><use href="#term"/></svg><span style="letter-spacing:-0.04px">GSI-SSHTerm [scarf.rl.ac...</span></div>
<div class="tb" style="left:499px;top:1151px;"><svg class="a" style="left:4px;top:2px" width="16" height="16"><use href="#term"/></svg><span style="letter-spacing:0.03px">sshterm.bat</span></div>
<div class="tb" style="left:662px;top:1151px;"><svg class="a" style="left:4px;top:2px" width="16" height="16"><use href="#fold"/></svg><span style="letter-spacing:-0.24px">Old Pictures in Babylon5</span></div>
<div class="tb" style="left:825px;top:1151px;"><svg class="a" style="left:4px;top:2px" width="16" height="16"><use href="#doc"/></svg><span style="letter-spacing:-0.16px">TOSCA.Published [Read-...</span></div>
<div class="tb" style="left:988px;top:1151px;border-color:#404040 #fff #fff #404040;box-shadow:inset 1px 1px 0 #808080;background:#eae8e3"><svg class="a" style="left:4px;top:2px" width="16" height="16"><use href="#acl"/></svg><span style="font-weight:bold;top:6px;left:24px;letter-spacing:.22px">a-CLIMAX v.6.0.0 LE - ...</span></div>
<div class="tb" style="left:1151px;top:1151px;background:#0a246a;border-color:#0a246a;box-shadow:none"><div class="a" style="left:5px;top:3px;width:14px;height:13px;background:#f4f4f4;border:1px solid #fff"><div class="a" style="left:3px;top:3px;width:6px;height:6px;border:1px dotted #a0a0a0;border-radius:50%"></div></div><span style="color:#fff;letter-spacing:-.08px">Adobe Updater</span></div>
<svg class="a" style="left:62px;top:1131px" width="16" height="16" viewBox="0 0 16 16"><use href="#ie"/></svg>
<svg class="a" style="left:85px;top:1131px" width="16" height="16" viewBox="0 0 16 16"><rect x="1.500" y="2" width="12" height="12" rx="2.500" fill="#1870e0"/><rect x="1.500" y="2" width="12" height="12" rx="2.500" fill="none" stroke="#0c50b0" stroke-width=".6"/><circle cx="7.500" cy="8" r="3.800" fill="#fff"/><path d="M5.500 8.500l2 1.500 2.500-3.500" stroke="#1870e0" fill="none" stroke-width="1.300"/><path d="M11 2.500l3.500.5-1 3" fill="#fff4c0" stroke="#e8b020" stroke-width=".5"/><circle cx="14.300" cy="5.800" r=".8" fill="#e03020"/></svg>
<svg class="a" style="left:108px;top:1131px" width="16" height="16" viewBox="0 0 16 16"><circle cx="8.500" cy="7.500" r="6" fill="#2a50b8"/><circle cx="9.500" cy="6" r="3" fill="#5080e0"/><path d="M1.500 5.500C1 2.500 3 1.500 3.500 1.500c0 1 .5 1.500 1.500 2C7 2.500 9 3 9.500 4.500 8 4.500 7 5 7 6.500c1 .5 2 .5 2.500 1.500-1.500.5-2.500 1.500-1.500 3 2 1 5-.5 5.500-3.500.5 4-2 7.500-6 7.500S1 11.500 1.500 5.500z" fill="#f07810"/><path d="M2 6c0 5 2.500 7.500 6 8-3 0-6.500-3-6-8z" fill="#c84808"/></svg>
<svg class="a" style="left:131px;top:1131px" width="16" height="16" viewBox="0 0 16 16"><circle cx="8" cy="8" r="6.5" fill="#b0c8e0" stroke="#8090a8"/><circle cx="8" cy="8" r="4.500" fill="#4a90d8"/><path d="M5 11l2-4 4-2-2 4z" fill="#fff"/><path d="M5 11l2-4 2 2z" fill="#d03020"/></svg>
<svg class="a" style="left:154px;top:1131px" width="16" height="16" viewBox="0 0 16 16"><rect x="1" y="2" width="14" height="13" fill="#fff" stroke="#404040"/><rect x="1" y="2" width="14" height="3" fill="#303030"/><path d="M1 8h14M1 11h14M5 5v10M9 5v10M12 5v10" stroke="#404040" stroke-width=".7"/><rect x="9" y="1" width="6" height="5" fill="none" stroke="#e02020"/><rect x="5" y="8" width="4" height="3" fill="#e04040"/></svg>
<svg class="a" style="left:177px;top:1131px" width="16" height="16" viewBox="0 0 16 16"><rect x="7" y="1" width="8" height="8" fill="#d8e0f8" stroke="#3050c0"/><circle cx="7" cy="9" r="6" fill="#e04838"/><circle cx="7" cy="9" r="4" fill="#f08070"/><path d="M4 12l6-6" stroke="#fff"/></svg>
<svg class="a" style="left:200px;top:1131px" width="16" height="16" viewBox="0 0 16 16"><rect x="3" y="1" width="10" height="14" rx="1" fill="#70a0e0" stroke="#4070b8"/><rect x="4.500" y="2.500" width="7" height="3" fill="#d8e8ff"/><path d="M5 8h6M5 10h6M5 12h6" stroke="#d0e0ff" stroke-dasharray="1.500 .8"/></svg>
<svg class="a" style="left:223px;top:1131px" width="16" height="16" viewBox="0 0 16 16"><path d="M.5 3h4l3 6 3-6h4.500v1.500h-1V13h1v1.500h-5V13h1V7.500L8 13.500 4.500 7.500V13h1v1.500H.5V13h1V4.500h-1z" fill="#3a6884" stroke="#284858" stroke-width=".5"/></svg>
<svg class="a" style="left:246px;top:1131px" width="16" height="16" viewBox="0 0 16 16"><path d="M3 1.500h8.500L9 4c2.500 2 4 5 2 10.500-.5-3.500-2-5.500-4.500-7L4 10z" fill="#38a828" stroke="#1c6c14" stroke-width=".7"/><path d="M4 2.500h5L5 6z" fill="#88e068"/></svg>
<svg class="a" style="left:269px;top:1131px" width="16" height="16" viewBox="0 0 16 16"><circle cx="8" cy="8" r="7" fill="#f08018"/><path d="M8 1a7 7 0 0 1 7 7H8z" fill="#e83820"/><path d="M15 8a7 7 0 0 1-7 7V8z" fill="#f8c820"/><path d="M8 15a7 7 0 0 1-7-7h7z" fill="#3068d0"/><path d="M1 8a7 7 0 0 1 7-7v7z" fill="#40a838"/><circle cx="8" cy="8" r="4.300" fill="#f4f4f8"/><path d="M6.500 5.500l4 2.500-4 2.500z" fill="#101010"/></svg>
<svg class="a" style="left:292px;top:1131px" width="16" height="16" viewBox="0 0 16 16"><rect x="1" y="2" width="11" height="11" rx="1.500" fill="none" stroke="#f09030" stroke-width="1.300"/><circle cx="10" cy="9.500" r="5.300" fill="#fff0c0" stroke="#f0b040" stroke-width="1.200"/><path d="M7.500 8.500l2.500 2 2.500-2" stroke="#d08820" fill="none" stroke-width="1.300"/></svg>
<svg class="a" style="left:62px;top:1153px" width="16" height="16" viewBox="0 0 16 16"><rect x="1" y="1.500" width="10" height="11" rx="1.500" fill="none" stroke="#f05828" stroke-width="1.300"/><rect x="4" y="4.500" width="10.500" height="9.500" fill="#f05828"/><circle cx="9.500" cy="9" r="3" fill="#fff"/><circle cx="10" cy="9" r="1.500" fill="#f05828"/></svg>
<svg class="a" style="left:85px;top:1153px" width="16" height="16" viewBox="0 0 16 16"><path d="M3 2h9l2 12H5z" fill="#60a0e8"/><path d="M2 4h9l2 11H4z" fill="#90c0f8"/></svg>
<svg class="a" style="left:108px;top:1153px" width="16" height="16" viewBox="0 0 16 16"><rect x="1" y="1.500" width="10" height="11" rx="1" fill="#f4fff4" stroke="#40a040" stroke-width="1.200"/><rect x="4" y="4.500" width="11" height="10" fill="#f8fff8" stroke="#208838" stroke-width=".8"/><path d="M5.500 6l7 7M12.500 6l-7 7" stroke="#187830" stroke-width="2"/></svg>
<svg class="a" style="left:131px;top:1153px" width="16" height="16" viewBox="0 0 16 16"><rect x="1" y="1.500" width="10" height="11" rx="1" fill="#f4f8ff" stroke="#4878d0" stroke-width="1.200"/><rect x="4" y="4.500" width="11" height="10" fill="#f4f8ff" stroke="#3060c0" stroke-width=".8"/><text x="4.500" y="13.500" font-family="Liberation Serif" font-size="10" font-weight="bold" font-style="italic" fill="#2858b8">W</text></svg>
<svg class="a" style="left:154px;top:1153px" width="16" height="16" viewBox="0 0 16 16"><rect x=".5" y=".5" width="15" height="15" fill="#fff" stroke="#2020e0"/><path d="M.5 15.500h15V.5" stroke="#e02020" fill="none"/><text x="1.500" y="10" font-family="Liberation Serif" font-size="9" font-weight="bold" fill="#2020e0">O</text><text x="7.500" y="13" font-family="Liberation Serif" font-size="9" font-weight="bold" fill="#e02020">G</text></svg>
<svg class="a" style="left:177px;top:1153px" width="16" height="16" viewBox="0 0 16 16"><use href="#cmd"/></svg>
<svg class="a" style="left:200px;top:1153px" width="16" height="16" viewBox="0 0 16 16"><use href="#npp"/></svg>
<svg class="a" style="left:223px;top:1153px" width="16" height="16" viewBox="0 0 16 16"><rect width="16" height="16" fill="#fff"/><path d="M1 1l3 3 1-2 2 5 1-2 2 5 2-1 2 5" stroke="#000" fill="none" stroke-width=".8"/><path d="M2 3v10M3 14h2M5 6v8M8 9v5M10 12h4" stroke="#e02020" stroke-width=".8"/></svg>
<svg class="a" style="left:246px;top:1153px" width="16" height="16" viewBox="0 0 16 16"><use href="#pic"/></svg>
<svg class="a" style="left:269px;top:1153px" width="16" height="16" viewBox="0 0 16 16"><rect y="1" width="16" height="14" fill="#fff"/><path d="M0 1.500h16M0 14.500h16" stroke="#000"/><text x="0" y="13" font-family="Liberation Sans" font-size="13" fill="#e02020">V</text><text x="8" y="13" font-family="Liberation Sans" font-size="11" fill="#2040c0">c</text><path d="M8 4h5v3" stroke="#2040c0" fill="none"/></svg>
<svg class="a" style="left:292px;top:1153px" width="16" height="16" viewBox="0 0 16 16"><path d="M2 8c0-4 6-6 9-4 2 2-1 3 0 5 1 2-2 5-5 4-3 0-4-2-4-5z" fill="#c89060"/><circle cx="5" cy="7" r="1" fill="#e02020"/><circle cx="8" cy="5" r="1" fill="#20a020"/><circle cx="5" cy="10" r="1" fill="#2040e0"/><path d="M15 1L8 12l-1 3 2-2z" fill="#3080e0"/></svg>
<svg class="a" style="left:62px;top:1175px" width="16" height="16" viewBox="0 0 16 16"><rect width="16" height="16" fill="#000"/><rect x="1" y="1" width="14" height="14" fill="none" stroke="#505050" stroke-width=".6"/><path d="M1.500 14L8 5.500 14.500 14z" fill="#e03020"/><path d="M4 14l4-5.500L12 14z" fill="#f8e0a0"/><path d="M2 11L9 2.500" stroke="#fff" stroke-width=".8"/><circle cx="8" cy="12.500" r="1.500" fill="#a01010"/></svg>
<svg class="a" style="left:85px;top:1175px" width="16" height="16" viewBox="0 0 16 16"><path d="M1 15V6.500h3l2.500 5 2.500-5h3V15H9.500V10L7 15H6L3.500 10v5z" fill="#187818" stroke="#0c400c" stroke-width=".5"/><circle cx="9" cy="2.500" r="2" fill="#30c030"/><path d="M9 4.500v3M6 5.500l3 1 3-1.500" stroke="#30c030" fill="none" stroke-width="1.200"/></svg>
<svg class="a" style="left:108px;top:1175px" width="16" height="16" viewBox="0 0 16 16"><use href="#fold"/><circle cx="7" cy="9" r="3" fill="#c0e0ff" stroke="#6080a0"/><path d="M9 11l3 3" stroke="#6080a0" stroke-width="1.500"/></svg>
<svg class="a" style="left:131px;top:1175px" width="16" height="16" viewBox="0 0 16 16"><use href="#term"/></svg>
<svg class="a" style="left:154px;top:1175px" width="16" height="16" viewBox="0 0 16 16"><ellipse cx="8" cy="9" rx="6" ry="5" fill="#fff" stroke="#000"/><path d="M2 5l3 2M14 5l-3 2M3 3h10" stroke="#000"/><circle cx="6" cy="8" r="1.200" fill="#000"/><circle cx="10" cy="8" r="1.200" fill="#000"/><ellipse cx="8" cy="11" rx="2" ry="1" fill="#000"/><circle cx="8" cy="14.500" r="1" fill="#e02020"/></svg>
<svg class="a" style="left:177px;top:1175px" width="16" height="16" viewBox="0 0 16 16"><rect x=".5" y=".5" width="15" height="15" fill="#fff" stroke="#606060"/><path d="M4 0v16M8 0v16M12 0v16M0 4h16M0 8h16M0 12h16" stroke="#c0c0c0" stroke-width=".6"/><path d="M1 14C5 12 9 8 15 2" stroke="#e04040" fill="none"/><path d="M1 10c4 4 8 4 14-2" stroke="#4040e0" fill="none"/><path d="M1 4c5 2 9 6 14 10" stroke="#40a040" fill="none"/></svg>
<svg class="a" style="left:200px;top:1175px" width="16" height="16" viewBox="0 0 16 16"><rect x="1" y="2" width="14" height="11" fill="#303030"/><rect x="1" y="2" width="14" height="2" fill="#606870"/><path d="M3 7l2 1.500-2 1.500M6 10h3" stroke="#c0c0c0" fill="none" stroke-width=".8"/></svg>
<svg class="a" style="left:223px;top:1175px" width="16" height="16" viewBox="0 0 16 16"><use href="#cmd"/></svg>
<svg class="a" style="left:246px;top:1175px" width="16" height="16" viewBox="0 0 16 16"><path d="M8 1l6 3v7l-6 4-6-4V4z" fill="#b0d0f0" stroke="#3070b0"/><path d="M2 4l6 3 6-3M8 7v8" stroke="#3070b0" fill="none"/><path d="M8 7l6-3v7l-6 4z" fill="#5090d0"/></svg>

<div class="t" style="left:1580px;top:1157px;letter-spacing:-1px">MSVDM</div>
<svg class="a" style="left:1623px;top:1154px" width="16" height="16"><circle cx="8" cy="8" r="7.500" fill="#3a9a18"/><circle cx="8" cy="6.500" r="5.800" fill="#6cc830"/><path d="M4.500 4.500h7v7h-7zM8 4.500v7M4.500 8h7" stroke="#fff" fill="none" stroke-width="1.200"/></svg>
<div class="a" style="left:1643px;top:1150px;width:23px;height:22px;border:1px solid;border-color:#808080 #fff #fff #808080;background:#e8e6e0"></div>
<svg class="a" style="left:1646px;top:1154px" width="16" height="16"><use href="#ball"/><text x="8" y="12" text-anchor="middle" font-family="Liberation Sans" font-size="10" fill="#fff">1</text></svg>
<svg class="a" style="left:1669px;top:1154px" width="16" height="16"><use href="#ball"/><text x="8" y="12" text-anchor="middle" font-family="Liberation Sans" font-size="10" fill="#fff">2</text></svg>
<svg class="a" style="left:1691px;top:1154px" width="16" height="16"><use href="#ball"/><text x="8" y="12" text-anchor="middle" font-family="Liberation Sans" font-size="10" fill="#fff">3</text></svg>
<svg class="a" style="left:1714px;top:1154px" width="16" height="16"><use href="#ball"/><text x="8" y="12" text-anchor="middle" font-family="Liberation Sans" font-size="10" fill="#fff">4</text></svg>
<div class="t" style="left:1752px;top:1157px">Desktop</div>
<svg class="a" style="left:1799px;top:1130px" width="10" height="8"><path d="M1 1l2.500 2.500L1 6M5.500 1L8 3.500 5.500 6" stroke="#000" stroke-width="1.600" fill="none"/></svg>
<div class="a" style="left:1812px;top:1126px;width:106px;height:71px;border:1px solid;border-color:#808080 #fff #fff #808080"></div>
<svg class="a" style="left:1816px;top:1159px" width="10" height="8"><path d="M4 1L1.500 3.500 4 6M8.500 1L6 3.500 8.500 6" stroke="#000" stroke-width="1.600" fill="none"/></svg>
<svg class="a" style="left:1829px;top:1135px" width="17" height="17"><path d="M1 1.500q3.500 1.500 7 0q3.500 1.500 7.500 0v7q-1 6-7.500 8q-6-2-7-8z" fill="#4858d8"/><path d="M8 1.500q3.500 1.500 7.500 0v7q-1 6-7.500 8z" fill="#8898f4"/><path d="M1.500 4.500h6.500M1.500 7.500h6.500M2 10.500h6" stroke="#c8d0ff" stroke-width="1.200"/></svg>
<svg class="a" style="left:1829px;top:1154px" width="16" height="16"><rect x="6" y="3" width="9" height="12" fill="#f0e020" stroke="#606000" stroke-width=".7"/><path d="M1 2v9l3 3h4V8H5V2z" fill="#a0a0a0" stroke="#303030" stroke-width=".7"/><path d="M10 5h3M11.500 3.500v3" stroke="#e02020" stroke-width="1.200"/><path d="M2 14h6" stroke="#000"/></svg>
<div class="t" style="left:1845px;width:70px;text-align:center;top:1138px">16:47</div>
<div class="t" style="left:1845px;width:70px;text-align:center;top:1157px">Tuesday</div>
<div class="t" style="left:1845px;width:70px;text-align:center;top:1176px">27/10/2009</div>


</body></html>
